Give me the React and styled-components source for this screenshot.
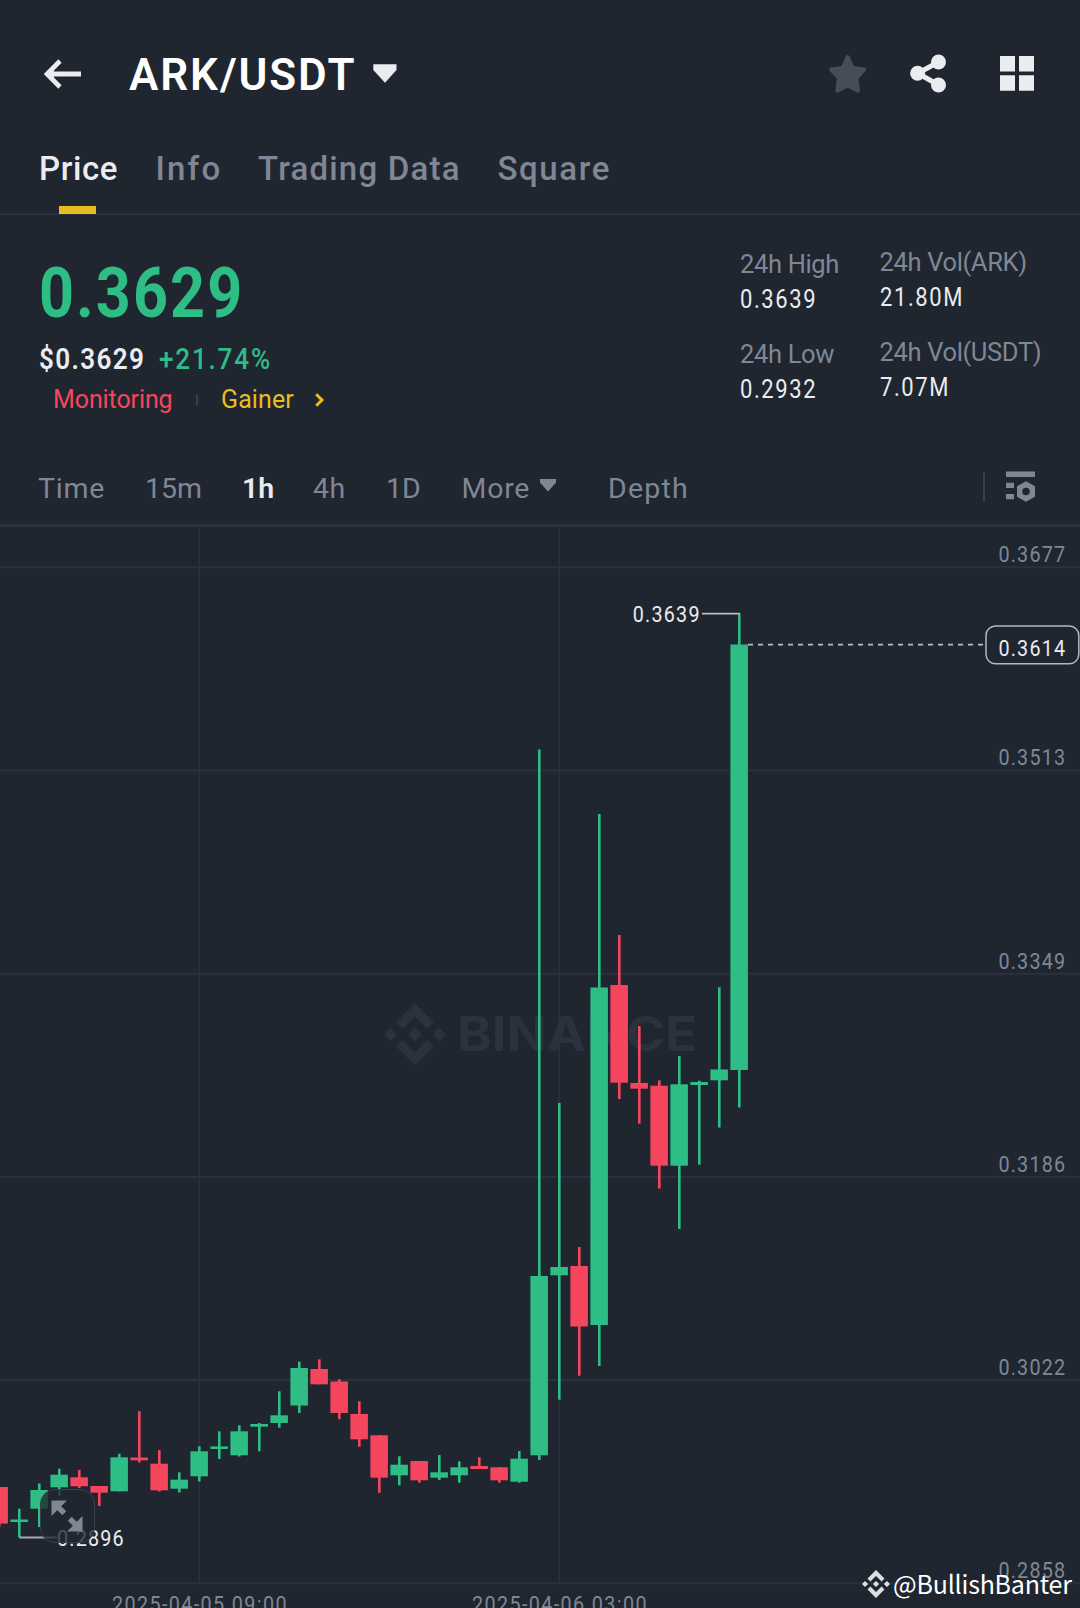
import React from "react";
import styled, { createGlobalStyle } from "styled-components";

const color = {
  bg: "#202630",
  line: "#2b313c",
  text: "#eaecef",
  muted: "#7f8795",
  green: "#2ebd85",
  red: "#f6465d",
  yellow: "#eabc20",
};

const GlobalStyle = createGlobalStyle`
  body { margin: 0; background: ${color.bg}; }
  * { box-sizing: border-box; }
`;

const Screen = styled.div`
  width: 1080px;
  height: 1608px;
  overflow: hidden;
  display: flex;
  flex-direction: column;
  background: ${color.bg};
  color: ${color.text};
  font-family: Roboto, "Liberation Sans", sans-serif;
`;

const Icon = styled.svg`
  display: block;
  flex: none;
`;

// Narrowed digits with open spacing, in the manner of DIN figures.
const Figures = styled.span`
  display: inline-block;
  width: ${(p) => (p.$width ? `${p.$width}px` : "auto")};
  white-space: nowrap;
  letter-spacing: ${(p) => p.$spacing}px;
  transform: scaleX(${(p) => p.$scale || 0.88});
  transform-origin: left center;
`;

const Header = styled.header`
  height: 148px;
  padding: 0 46px 0 44px;
  display: flex;
  align-items: center;
`;

const Title = styled.h1`
  margin: 2px 17px 0 47px;
  font-size: 44px;
  line-height: 52px;
  font-weight: 600;
  letter-spacing: 1.9px;
  color: #fff;
`;

const Actions = styled.div`
  margin: 0 0 1px auto;
  display: flex;
  align-items: center;
`;

const Action = styled.div`
  margin-left: ${(p) => p.$gap || 0}px;
`;

const Tabs = styled.nav`
  height: 67px;
  padding: 1px 0 0 39px;
  display: grid;
  grid-template-columns: 116.5px 102.5px 239.5px 130px;
  border-bottom: 2px solid ${color.line};
`;

const Tab = styled.div`
  display: flex;
  flex-direction: column;
  align-items: flex-start;
  font-size: 33px;
  line-height: 40px;
  font-weight: 500;
  letter-spacing: ${(p) => p.$spacing || 0}px;
  white-space: nowrap;
  color: ${(p) => (p.$active ? color.text : color.muted)};
`;

const TabMark = styled.span`
  width: 37px;
  height: 8px;
  margin: 16.5px 0 0 20px;
  background: ${color.yellow};
`;

const Summary = styled.section`
  height: 237px;
  padding-left: 39px;
  display: flex;
  justify-content: space-between;
`;

const Quote = styled.div`
  padding-top: 38px;
`;

const LastPrice = styled.div`
  font-size: 71px;
  line-height: 80px;
  font-weight: 700;
  color: ${color.green};
`;

const Change = styled.div`
  display: flex;
  gap: 15px;
  margin-top: 8px;
  font-size: 29px;
  line-height: 36px;
  font-weight: 600;
`;

const Percent = styled.span`
  font-weight: 500;
  color: ${color.green};
`;

const Tags = styled.div`
  display: flex;
  align-items: center;
  margin-top: 5px;
  padding-left: 14px;
  font-size: 25px;
  line-height: 36px;
`;

const Tag = styled.span`
  width: ${(p) => p.$width}px;
  color: ${(p) => p.$tone};
  letter-spacing: ${(p) => p.$spacing || 0}px;
  white-space: nowrap;
`;

const TagRule = styled.span`
  width: 2px;
  height: 10px;
  margin-right: 23px;
  background: #3a414d;
`;

const Stats = styled.div`
  width: 340px;
  padding-top: 30px;
  display: grid;
  grid-template-columns: 139.5px 200px;
`;

const StatColumn = styled.div`
  display: flex;
  flex-direction: column;
  gap: 20px;
  padding-top: ${(p) => p.$drop || 0}px;
`;

const Stat = styled.dl`
  margin: 0;
  line-height: 35px;
  white-space: nowrap;
`;

const StatName = styled.dt`
  font-size: 25.5px;
  letter-spacing: -0.35px;
  color: ${color.muted};
`;

const StatValue = styled.dd`
  margin: 0;
  height: 35px;
  font-size: 25px;
`;

const Intervals = styled.nav`
  height: 75px;
  padding: 17px 45px 0 38px;
  display: grid;
  grid-template-columns: 107px 97px 71px 73px 75.5px 146.5px 374.5px 23.5px 29px;
  align-items: start;
  border-bottom: 3px solid ${color.line};
`;

const Interval = styled.div`
  display: flex;
  gap: 9.5px;
  font-size: 28.5px;
  line-height: 40px;
  font-weight: ${(p) => (p.$active ? 600 : 400)};
  letter-spacing: ${(p) => p.$spacing || 0}px;
  color: ${(p) => (p.$active ? color.text : color.muted)};
`;

const IntervalRule = styled.span`
  width: 2px;
  height: 30px;
  margin-top: 3px;
  background: #3a404b;
`;

const Spaced = styled.span`
  margin-top: ${(p) => p.$top}px;
`;

const ChartPanel = styled.section`
  position: relative;
  height: 1081px;
`;

const Chart = styled.svg`
  display: block;
  font-family: Roboto, "Liberation Sans", sans-serif;
`;

const ExpandButton = styled.button`
  position: absolute;
  left: 40px;
  bottom: 65px;
  width: 55px;
  height: 54px;
  padding: 0 2px 0 0;
  display: flex;
  align-items: center;
  justify-content: center;
  border: 1px solid #3a3f4a;
  border-radius: 15px;
  background: rgba(32, 38, 48, 0.78);
`;

const Credit = styled.div`
  position: absolute;
  left: 862px;
  bottom: 4px;
  display: flex;
  align-items: center;
  gap: 3px;
  font-family: "Noto Sans CJK SC", "Noto Sans", sans-serif;
  font-size: 25px;
  line-height: 40px;
  letter-spacing: -0.2px;
  color: #fff;
`;

const Handle = styled.span`
  margin-bottom: 1px;
`;

// Vertical positions are page coordinates; the chart's viewBox starts at 527.
const candles = [
  [-1, "d", 1487, 1523.5, 1487, 1526.5],
  [19, "u", 1519.5, 1522, 1508.7, 1537],
  [39, "u", 1490, 1508.7, 1483.5, 1527],
  [59, "u", 1474.7, 1487.3, 1468.7, 1496],
  [79, "d", 1477.3, 1486.3, 1470, 1488],
  [99, "d", 1486, 1492.7, 1486, 1506],
  [119, "u", 1457.3, 1491.3, 1453.7, 1491.3],
  [139, "d", 1457.5, 1460.3, 1411.3, 1462.5],
  [159, "d", 1463.7, 1490.3, 1450, 1491.5],
  [179, "u", 1479.7, 1488.7, 1472.3, 1492.5],
  [199, "u", 1451.3, 1476.3, 1446.3, 1481.5],
  [219, "u", 1446.4, 1449, 1431.3, 1459],
  [239, "u", 1431.3, 1455.3, 1425.3, 1456.5],
  [259, "u", 1424, 1426.7, 1423, 1451.3],
  [279, "u", 1415.3, 1423, 1391.3, 1427.7],
  [299, "u", 1368, 1405.5, 1361.7, 1413],
  [319, "d", 1369, 1384.3, 1359.3, 1384.3],
  [339, "d", 1381.5, 1413, 1379.3, 1419.3],
  [359, "d", 1414, 1439.3, 1401.3, 1446.7],
  [379, "d", 1435.3, 1477.7, 1435.3, 1492.7],
  [399, "u", 1464.7, 1475.3, 1456.3, 1485.3],
  [419, "d", 1461, 1480.3, 1461, 1482.7],
  [439, "u", 1472.3, 1477.7, 1455, 1480],
  [459, "u", 1467.3, 1475.3, 1461.3, 1482.7],
  [479, "d", 1466, 1469, 1457.3, 1469],
  [499, "d", 1467.3, 1480.3, 1467.3, 1482.7],
  [519, "u", 1458.7, 1481.7, 1451, 1482.7],
  [539, "u", 1276, 1455.3, 749.5, 1460],
  [559, "u", 1267, 1275.3, 1103, 1399.7],
  [579, "d", 1266, 1326.5, 1247, 1375.7],
  [599, "u", 987.5, 1325, 814, 1366],
  [619, "d", 985, 1082.7, 935, 1099],
  [639, "d", 1083, 1088.7, 1026, 1123.7],
  [659, "d", 1085.7, 1165.7, 1080.3, 1188.5],
  [679, "u", 1084.3, 1165.7, 1056, 1229],
  [699, "u", 1082, 1085, 1080.7, 1164.7],
  [719, "u", 1069.5, 1080.3, 987.3, 1127.5],
  [739, "u", 644.5, 1070, 613.5, 1107.5],
];

const priceLevels = [
  ["0.3677", 567.3],
  ["0.3513", 770.5],
  ["0.3349", 973.7],
  ["0.3186", 1176.9],
  ["0.3022", 1380.1],
  ["0.2858", 1583.3],
];

const dates = [
  ["2025-04-05 09:00", 199.3],
  ["2025-04-06 03:00", 559.3],
];

const BrandMark = () => (
  <>
    <path d="M31 0L49.8 18.8L43.3 25.4L31 13.2L18.7 25.4L12.2 18.8Z" />
    <path d="M31 62L49.8 43.2L43.3 36.6L31 48.8L18.7 36.6L12.2 43.2Z" />
    <path d="M0 31L6.7 24.3L13.4 31L6.7 37.7Z" />
    <path d="M24.1 31L31 24.1L37.9 31L31 37.9Z" />
    <path d="M48.6 31L55.3 24.3L62 31L55.3 37.7Z" />
  </>
);

const Candle = ({ data: [x, direction, top, bottom, high, low] }) => (
  <g fill={direction === "u" ? color.green : color.red}>
    <rect x={x - 1} y={high} width="2.6" height={low - high} />
    <rect x={x - 8.6} y={top} width="17.5" height={bottom - top} />
  </g>
);

const ChartLabel = ({ x, y, width, children }) => (
  <text transform={`translate(${x} ${y}) scale(0.87 1)`} textLength={width / 0.87}>
    {children}
  </text>
);

const PriceChart = () => (
  <Chart width="1080" height="1081" viewBox="0 527 1080 1081">
    <g stroke={color.line} strokeWidth="2">
      {priceLevels.map(([label, y]) => (
        <line key={label} x1="0" x2="1080" y1={y} y2={y} />
      ))}
      {dates.map(([label, x]) => (
        <line key={label} x1={x} x2={x} y1="527" y2="1583" strokeWidth="1.6" />
      ))}
    </g>
    <g fill="#2c323d">
      <g transform="translate(384 1003.5)">
        <BrandMark />
      </g>
      <text
        x="457"
        y="1051.3"
        textLength="240"
        lengthAdjust="spacingAndGlyphs"
        fontSize="47.5"
        fontWeight="700"
        fontFamily="Inter, sans-serif"
      >
        BINANCE
      </text>
    </g>
    {candles.map((c) => (
      <Candle key={c[0]} data={c} />
    ))}
    <g fill={color.muted} fontSize="22.7">
      {priceLevels.map(([label, y]) => (
        <ChartLabel key={label} x={998.4} y={y - 5.2} width={66.7}>
          {label}
        </ChartLabel>
      ))}
      {dates.map(([label, x]) => (
        <ChartLabel key={label} x={x - 87.3} y={1611.5} width={174.5}>
          {label}
        </ChartLabel>
      ))}
    </g>
    <g fill="none" stroke="#b9bdc5" strokeWidth="1.8">
      <path d="M702 613.6H740" />
      <path d="M19 1537.5H57" stroke="#a5a9b2" />
      <path d="M748 644.7H984" strokeDasharray="5 5" />
    </g>
    <rect x="986" y="626" width="92.8" height="37.7" rx="9.5" fill={color.bg} stroke="#b4b8c0" strokeWidth="1.5" />
    <g fill={color.text} fontSize="22.7">
      <ChartLabel x={632.8} y={622.2} width={66.7}>0.3639</ChartLabel>
      <ChartLabel x={998.4} y={656.4} width={66.7}>0.3614</ChartLabel>
      <ChartLabel x={57} y={1546.4} width={66.7}>0.2896</ChartLabel>
    </g>
  </Chart>
);

const tabs = [
  ["Price", 0.6],
  ["Info", 2.2],
  ["Trading Data", 1.2],
  ["Square", 1.6],
];

const statColumns = [
  {
    drop: 2,
    rows: [
      ["24h High", "0.3639"],
      ["24h Low", "0.2932"],
    ],
  },
  {
    drop: 0,
    rows: [
      ["24h Vol(ARK)", "21.80M"],
      ["24h Vol(USDT)", "7.07M"],
    ],
  },
];

export default function App() {
  return (
    <Screen>
      <GlobalStyle />
      <Header>
        <Icon width="38" height="30" viewBox="0 0 38 30" fill="none" stroke={color.text}>
          <path d="M9 15H37" strokeWidth="5" />
          <path d="M16 2L3 15L16 28" strokeWidth="4.6" />
          <path d="M3 15L10 8V22Z" fill={color.text} stroke="none" />
        </Icon>
        <Title>ARK/USDT</Title>
        <Icon width="24" height="20" viewBox="0 0 24 20" fill={color.text}>
          <path d="M0.3 0.3H23.5V6L12 18.8L0.3 6Z" />
        </Icon>
        <Actions>
          <Action>
            <Icon width="38" height="39" viewBox="0 0 38 39" fill="#474d58" stroke="#474d58" strokeWidth="4" strokeLinejoin="round">
              <path d="M18.7 3L23.6 14L35.2 15.6L27.4 23.8L29 36.6L18.7 31.4L8.4 36.600L10 23.800L2.200 15.600L13.800 14Z" />
            </Icon>
          </Action>
          <Action $gap={43}>
            <Icon width="37" height="39" viewBox="0 0 37 39" fill={color.text}>
              <path d="M28.5 8L7.800 19.200L28.500 31" fill="none" stroke={color.text} strokeWidth="5" />
              <circle cx="28.5" cy="8" r="7.5" />
              <circle cx="7.6" cy="19.3" r="7.500" />
              <circle cx="28.5" cy="31" r="7.5" />
            </Icon>
          </Action>
          <Action $gap={53}>
            <Icon width="34" height="35" viewBox="0 0 34 35" fill={color.text}>
              <path d="M0 0H15V15.5H0ZM19 0H34V15.5H19ZM0 19.3H15V34.8H0ZM19 19.3H34V34.8H19Z" />
            </Icon>
          </Action>
        </Actions>
      </Header>

      <Tabs>
        {tabs.map(([label, spacing], i) => (
          <Tab key={label} $active={i === 0} $spacing={spacing}>
            {label}
            {i === 0 && <TabMark />}
          </Tab>
        ))}
      </Tabs>

      <Summary>
        <Quote>
          <LastPrice>
            <Figures $spacing={2.4} $scale={0.86}>0.3629</Figures>
          </LastPrice>
          <Change>
            <Figures $spacing={1.5} $scale={0.9} $width={105}>$0.3629</Figures>
            <Percent>
              <Figures $spacing={2} $scale={0.9}>+21.74%</Figures>
            </Percent>
          </Change>
          <Tags>
            <Tag $tone={color.red} $width={143} $spacing={-0.1}>Monitoring</Tag>
            <TagRule />
            <Tag $tone={color.yellow} $width={94} $spacing={0.1}>Gainer</Tag>
            <Icon width="10" height="14" viewBox="0 0 10 14" fill="none" stroke={color.yellow} strokeWidth="3">
              <path d="M1.2 1.2L7 7L1.2 12.8" />
            </Icon>
          </Tags>
        </Quote>
        <Stats>
          {statColumns.map((column) => (
            <StatColumn key={column.drop} $drop={column.drop}>
              {column.rows.map(([name, value]) => (
                <Stat key={name}>
                  <StatName>{name}</StatName>
                  <StatValue>
                    <Figures $spacing={1.8}>{value}</Figures>
                  </StatValue>
                </Stat>
              ))}
            </StatColumn>
          ))}
        </Stats>
      </Summary>

      <Intervals>
        <Interval $spacing={0.75}>Time</Interval>
        <Interval>15m</Interval>
        <Interval $active>1h</Interval>
        <Interval $spacing={0.5}>4h</Interval>
        <Interval>1D</Interval>
        <Interval $spacing={0.75}>
          More
          <Spaced $top={10}>
            <Icon width="16" height="13" viewBox="0 0 16 13" fill={color.muted}>
              <path d="M0 0H16V3.5L8 12.5L0 3.5Z" />
            </Icon>
          </Spaced>
        </Interval>
        <Interval $spacing={1.2}>Depth</Interval>
        <IntervalRule />
        <Spaced $top={2}>
          <Icon width="29" height="31" viewBox="0 0 29 31" fill={color.muted}>
            <path d="M0 0.5H29V6H0ZM0 11.7H8V17H0ZM0 23H8V28.3H0Z" />
            <path
              fillRule="evenodd"
              d="M20 10.3L29 15.3V25.7L20 30.7L11 25.7V15.3ZM20 16.7A3.8 3.8 0 1 0 20 24.3A3.8 3.8 0 1 0 20 16.7Z"
            />
          </Icon>
        </Spaced>
      </Intervals>

      <ChartPanel>
        <PriceChart />
        <ExpandButton aria-label="Expand chart">
          <Icon width="32" height="32" viewBox="0 0 32 32" fill={color.muted} stroke={color.muted}>
            <path d="M0.5 0.5H16L0.5 16Z" stroke="none" />
            <path d="M31.5 31.5H16L31.500 16Z" stroke="none" />
            <path d="M5 5L13.300 13.300M27 27L18.700 18.700" strokeWidth="5.500" />
          </Icon>
        </ExpandButton>
        <Credit>
          <Icon width="28" height="28" viewBox="0 0 62 62" fill="#dcdfe4">
            <BrandMark />
          </Icon>
          <Handle>@BullishBanter</Handle>
        </Credit>
      </ChartPanel>
    </Screen>
  );
}
